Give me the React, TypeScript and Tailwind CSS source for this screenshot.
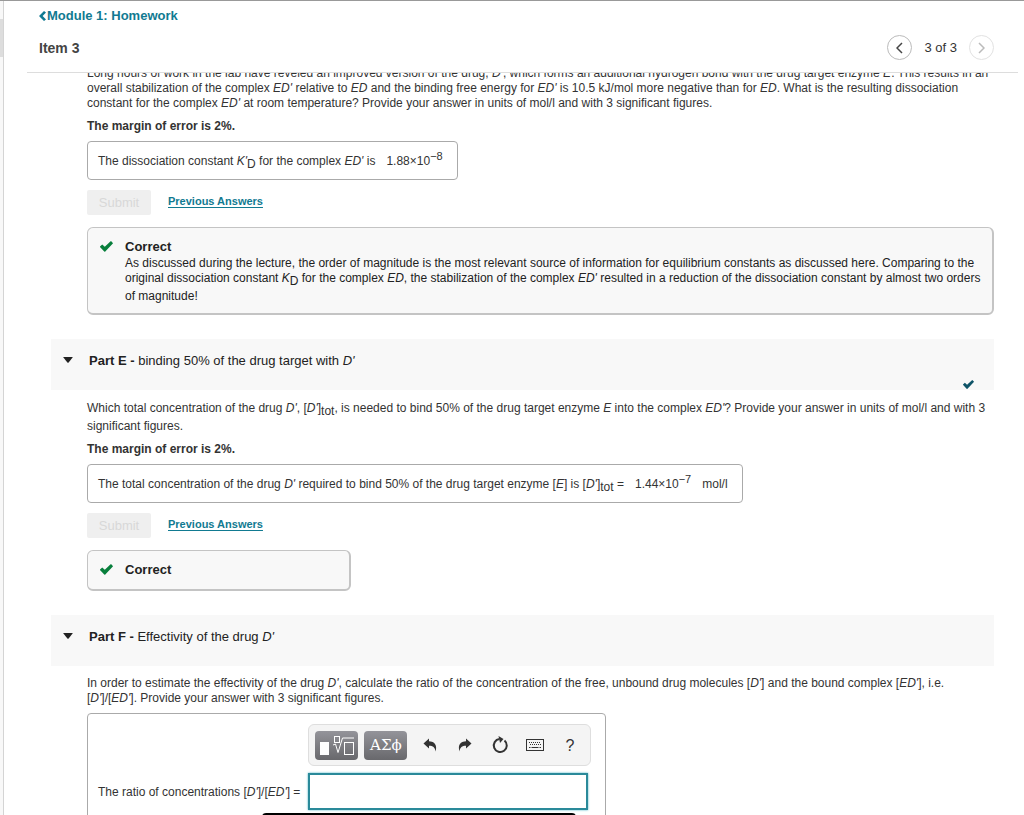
import { useState } from "react";
import type { ReactNode } from "react";

function Check({ className = "", width = 13, height = 11 }: { className?: string; width?: number; height?: number }) {
  return (
    <svg width={width} height={height} viewBox="0 0 38 31" fill="currentColor" className={className} aria-hidden="true">
      <path d="M0 15.500L6.500 9.500l7.500 7L31 .5q1-1 2 0l4.500 4.500q1 1 0 2L15.500 30q-1.500 1.500-3 0L.5 17.500q-1-1-.5-2z" />
    </svg>
  );
}

function Sub({ children }: { children: ReactNode }) {
  return <span className="align-sub">{children}</span>;
}

function MarginNote() {
  return <p className="mt-2 mb-[7px] font-bold">The margin of error is 2%.</p>;
}

function AnswerRow({ children }: { children: ReactNode }) {
  return (
    <div className="flex h-[39px] w-fit items-baseline gap-[11px] rounded-sm border border-[#aaa] bg-white pt-[7px] pr-[14px] pl-[10px]">
      {children}
    </div>
  );
}

function SubmitRow() {
  return (
    <div className="mt-[10px] flex items-start gap-[17px]">
      <button type="button" disabled className="h-[25px] w-16 rounded-xs bg-[#efefef] text-[13px] text-[#d8d8d8]">
        Submit
      </button>
      <a href="#previous" className="pt-1 text-[11px] font-bold text-[#117a91] underline underline-offset-2">
        Previous Answers
      </a>
    </div>
  );
}

function Feedback({ children, className = "" }: { children?: ReactNode; className?: string }) {
  return (
    <div className={`mt-3 flex gap-3 rounded-md border border-r-2 border-b-2 border-[#c4c4c4] bg-[#f8f8f8] pt-[11px] pl-3 text-[#222] ${className}`}>
      <Check className="mt-[2px] shrink-0 text-[#087f3c]" />
      <div className="min-w-0 flex-1">
        <h3 className="text-[13px] leading-4 font-bold">Correct</h3>
        {children}
      </div>
    </div>
  );
}

function PartHeader({ part, children, done = false }: { part: string; children: ReactNode; done?: boolean }) {
  return (
    <div className="mt-6 mr-[30px] ml-[47px] flex h-[51px] justify-between bg-[#f8f8f8] text-[13px] text-[#222]">
      <button type="button" className="flex h-[42px] items-center gap-4 pl-3 text-left">
        <svg width="10" height="6" viewBox="0 0 10 6" aria-hidden="true">
          <path d="M.5 0h9Q10 0 9.600.6L5.600 5.500Q5 6 4.400 5.500L.4.6Q0 0 .5 0z" fill="#222" />
        </svg>
        <span>
          <b>Part {part} -</b> {children}
        </span>
      </button>
      {done && <Check className="mr-5 mb-px self-end text-[#0f5468]" width={11} height={9} />}
    </div>
  );
}

function EquationToolbar() {
  const iconButton = "flex h-[29px] w-[35px] items-center justify-center text-[#333]";
  const paletteButton =
    "flex h-[29px] w-[43px] items-center justify-center rounded-sm bg-linear-to-b from-[#94949a] to-[#68686c] text-white";

  return (
    <div className="flex h-[42px] w-[283px] items-center rounded-md border border-[#dedede] bg-[#f4f4f4] pl-[6px]">
      <button type="button" aria-label="Templates" className={paletteButton}>
        <svg width="36" height="23" viewBox="0 0 36 23" fill="none" stroke="currentColor">
          <rect x="1" y="8" width="9" height="13" fill="currentColor" stroke="none" />
          <rect x="15.500" y="2.500" width="5" height="6" />
          <path d="M14 11l2.500-1 2.500 8.500 4.500-14.500H35" />
          <rect x="25.500" y="8.500" width="9" height="12" />
        </svg>
      </button>
      <button type="button" className={`${paletteButton} ml-[6px] font-['DejaVu_Serif',serif] text-[15px]`}>
        ΑΣϕ
      </button>
      <div className="ml-[5px] flex">
        <button type="button" aria-label="Undo" className={iconButton}>
          <svg width="14" height="14" viewBox="0 0 14 14" fill="currentColor">
            <path d="M.5 5.500L6 .5v2.800c5.500.2 8.500 3.700 6.500 10.200C12 9.500 10 7.800 6 7.800v2.700z" />
          </svg>
        </button>
        <button type="button" aria-label="Redo" className={iconButton}>
          <svg width="14" height="14" viewBox="0 0 14 14" fill="currentColor">
            <path d="M13.500 5.500L8 .5v2.800C2.500 3.500-.5 7 1.500 13.500 2 9.500 4 7.800 8 7.800v2.700z" />
          </svg>
        </button>
        <button type="button" aria-label="Reset" className={iconButton}>
          <svg width="18" height="18" viewBox="0 0 18 18" fill="none">
            <path d="M13.500 4.500A6.500 6.500 0 1 1 8.500 3" stroke="currentColor" strokeWidth="2" />
            <path d="M7.500 0l5 3-3.500 4z" fill="currentColor" />
          </svg>
        </button>
        <button type="button" aria-label="Keyboard shortcuts" className={iconButton}>
          <svg width="18" height="12" viewBox="0 0 18 12" fill="none" stroke="currentColor">
            <rect x=".5" y=".5" width="17" height="11" />
            <path d="M3 3.500h12M4 5.500h11" strokeDasharray="1 1" />
            <path d="M3 8.500h1.500M5.500 8.500h7M13.500 8.500h1.500" />
          </svg>
        </button>
        <button type="button" aria-label="Help" className={`${iconButton} text-[16px]`}>
          ?
        </button>
      </div>
    </div>
  );
}

export default function App() {
  const [ratio, setRatio] = useState("");

  return (
    <div className="flex h-screen overflow-hidden border-t border-[#999] bg-white font-['Liberation_Sans',Arial,sans-serif] text-xs leading-[15px] text-[#333]">
      <div className="w-1 shrink-0 border-r border-[#d4d4d4] bg-[#f8f8f8] pt-[18px]">
        <div className="h-[38px] bg-[#ddd]" />
      </div>

      <div className="flex min-w-0 flex-1 flex-col">
        <header className="mr-[6px] ml-[23px] h-[72px] shrink-0 border-b border-[#ddd] pt-[7px] pl-3">
          <a href="#module" className="flex w-fit items-center gap-px text-[13px] leading-4 font-bold text-[#117a91]">
            <svg width="7" height="10" viewBox="0 0 7 10" fill="currentColor" aria-hidden="true">
              <path d="M5 0l2 1.500L3.600 5 7 8.500 5 10 0 5z" />
            </svg>
            Module 1: Homework
          </a>
          <div className="mt-[11px] flex items-center justify-between pr-6">
            <h1 className="text-sm font-bold text-[#444]">Item 3</h1>
            <nav className="flex items-center gap-3 text-[13px]">
              <button type="button" aria-label="Previous item" className="flex size-[25px] items-center justify-center rounded-full border border-[#bbb] text-[#444]">
                <svg width="7" height="12" viewBox="0 0 7 12" fill="none" stroke="currentColor" strokeWidth="1.500">
                  <path d="M6 1L1 6l5 5" />
                </svg>
              </button>
              <span>3 of 3</span>
              <button type="button" disabled aria-label="Next item" className="flex size-[25px] items-center justify-center rounded-full border border-[#e2e2e2] text-[#bbb]">
                <svg width="7" height="12" viewBox="0 0 7 12" fill="none" stroke="currentColor" strokeWidth="1.500">
                  <path d="M1 1l5 5-5 5" />
                </svg>
              </button>
            </nav>
          </div>
        </header>

        <main className="min-h-0 flex-1 overflow-hidden">
          {/* Part D */}
          <section className="-mt-[7px] mr-[30px] ml-[83px]">
            <p>
              Long hours of work in the lab have reveled an improved version of the drug, <i>D'</i>, which forms an
              additional hydrogen bond with the drug target enzyme <i>E</i>. This results in an overall stabilization of
              the complex <i>ED'</i> relative to <i>ED</i> and the binding free energy for <i>ED'</i> is 10.5 kJ/mol more
              negative than for <i>ED</i>. What is the resulting dissociation
              <br />
              constant for the complex <i>ED'</i> at room temperature? Provide your answer in units of mol/l and with 3
              significant figures.
            </p>
            <MarginNote />
            <AnswerRow>
              <span>
                The dissociation constant <i>K'</i>
                <Sub>D</Sub> for the complex <i>ED'</i> is
              </span>
              <span>
                1.88×10<span className="align-super text-[11px]">−8</span>
              </span>
            </AnswerRow>
            <SubmitRow />
            <Feedback className="h-[88px]">
              <p className="mt-px">
                As discussed during the lecture, the order of magnitude is the most relevant source of information for
                equilibrium constants as discussed here. Comparing to the
                <br />
                original dissociation constant <i>K</i>
                <Sub>D</Sub> for the complex <i>ED</i>, the stabilization of the complex <i>ED'</i> resulted in a
                reduction of the dissociation constant by almost two orders of magnitude!
              </p>
            </Feedback>
          </section>

          {/* Part E */}
          <PartHeader part="E" done>
            binding 50% of the drug target with <i>D'</i>
          </PartHeader>
          <section className="mt-[11px] mr-[30px] ml-[83px]">
            <p>
              Which total concentration of the drug <i>D'</i>, [<i>D'</i>]<Sub>tot</Sub>, is needed to bind 50% of the drug
              target enzyme <i>E</i> into the complex <i>ED'</i>? Provide your answer in units of mol/l and with 3
              <br />
              significant figures.
            </p>
            <MarginNote />
            <AnswerRow>
              <span>
                The total concentration of the drug <i>D'</i> required to bind 50% of the drug target enzyme [<i>E</i>] is
                [<i>D'</i>]<Sub>tot</Sub> =
              </span>
              <span>
                1.44×10<span className="align-super text-[11px]">−7</span>
              </span>
              <span>mol/l</span>
            </AnswerRow>
            <SubmitRow />
            <Feedback className="h-[41px] w-[264px]" />
          </section>

          {/* Part F */}
          <PartHeader part="F">
            Effectivity of the drug <i>D'</i>
          </PartHeader>
          <section className="mt-[10px] mr-[30px] ml-[83px]">
            <p>
              In order to estimate the effectivity of the drug <i>D'</i>, calculate the ratio of the concentration of the
              free, unbound drug molecules [<i>D'</i>] and the bound complex [<i>ED'</i>], i.e.
              <br />[<i>D'</i>]/[<i>ED'</i>]. Provide your answer with 3 significant figures.
            </p>
            <div className="mt-[7px] flex w-fit items-end gap-2 rounded-sm border border-[#aaa] bg-white pt-[10px] pr-[14px] pb-10 pl-[10px]">
              <label htmlFor="ratio" className="pb-[10px]">
                The ratio of concentrations [<i>D'</i>]/[<i>ED'</i>] =
              </label>
              <div className="relative">
                <EquationToolbar />
                <input
                  id="ratio"
                  value={ratio}
                  onChange={(e) => setRatio(e.target.value)}
                  className="mt-[7px] block h-[37px] w-[280px] border-2 border-[#2a8a9a] bg-white px-2 shadow-[0_0_2px_#4bb3c8] outline-none"
                />
                {/* Input hint */}
                <div className="absolute top-full -left-[46px] mt-[3px] h-8 w-[314px] rounded-sm bg-black" />
              </div>
            </div>
          </section>
        </main>
      </div>
    </div>
  );
}
